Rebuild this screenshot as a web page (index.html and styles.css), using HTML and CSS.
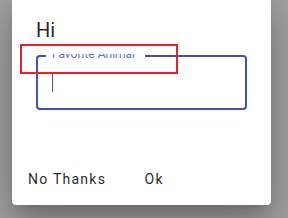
FILE: index.html
```html
<!DOCTYPE html>
<html>
  <head>
    <meta charset="UTF-8">
    <title>Dialog</title>
    <link rel="stylesheet" href="styles.css">
  </head>
  <body>
    <div class="dialog">
      <h2 class="dialog-title">Hi</h2>
      <div class="field">
        <div class="notch"><span class="label">Favorite Animal</span></div>
        <span class="caret"></span>
      </div>
      <div class="actions">
        <button class="button">No Thanks</button>
        <button class="button">Ok</button>
      </div>
      <div class="highlight"></div>
    </div>
  </body>
</html>
```

FILE: styles.css
```css
*
{
  box-sizing: border-box;
}

body
{
  margin: 0;
  height: 218px;
  overflow: hidden;
  background: #a2a2a2;
  font-family: Roboto, "Liberation Sans", sans-serif;
}

.dialog
{
  position: relative;
  width: 259px;
  margin-left: 12px;
  margin-top: -4px;
  padding-top: 18px;
  background: #fff;
  border-radius: 4px;
  box-shadow: 0 11px 15px -7px rgba(0, 0, 0, 0.2),
              0 24px 38px 3px rgba(0, 0, 0, 0.14),
              0 9px 46px 8px rgba(0, 0, 0, 0.12);
}

.dialog-title
{
  margin: 0;
  padding: 0 24px;
  font-size: 20px;
  font-weight: 400;
  line-height: 32px;
  color: rgba(0, 0, 0, 0.87);
}

.field
{
  position: relative;
  display: flex;
  align-items: center;
  height: 55px;
  margin: 9px 24px 0;
  padding-left: 14px;
  border: 2px solid #3f51b5;
  border-radius: 4px;
}

.notch
{
  position: absolute;
  left: 8px;
  top: -3px;
  width: 99px;
  height: 6px;
  padding-left: 6px;
  background: #fff;
  overflow: hidden;
}

.label
{
  display: block;
  margin-top: -6px;
  font-size: 12px;
  line-height: 12px;
  color: #6573c3;
  white-space: nowrap;
}

.caret
{
  width: 1px;
  height: 18px;
  background: #3f51b5;
}

.actions
{
  display: flex;
  gap: 8px;
  margin-top: 43px;
  padding: 8px;
}

.button
{
  min-width: 64px;
  height: 36px;
  padding: 0 8px;
  border: none;
  background: none;
  font-family: Roboto, "Liberation Sans", sans-serif;
  font-size: 14px;
  font-weight: 400;
  letter-spacing: 1.25px;
  color: rgba(0, 0, 0, 0.87);
}

.highlight
{
  position: absolute;
  left: 8px;
  top: 48px;
  width: 158px;
  height: 30px;
  border: 2px solid #e8202a;
}
```
